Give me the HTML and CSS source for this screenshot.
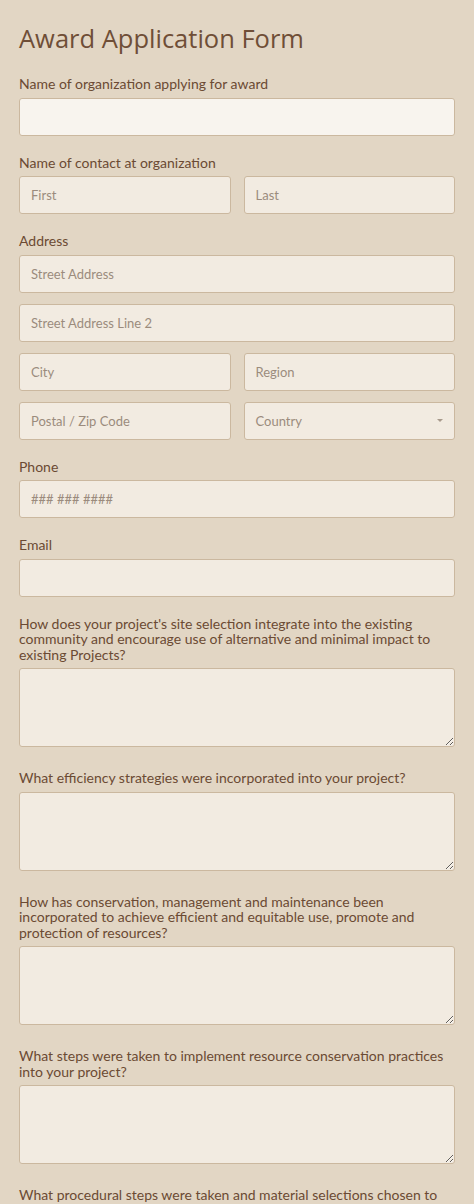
FILE: index.html
```html
<!DOCTYPE html>
<html lang="en">
<head>
  <meta charset="UTF-8">
  <title>Award Application Form</title>
  <link rel="stylesheet" href="styles.css">
</head>

<body>

  <form class="form">
    <h1 class="form-title">Award Application Form</h1>

    <div class="field">
      <label class="label">Name of organization applying for award</label>
      <input class="input input-focus" type="text">
    </div>

    <div class="field">
      <label class="label">Name of contact at organization</label>
      <div class="row">
        <input class="input" type="text" placeholder="First">
        <input class="input" type="text" placeholder="Last">
      </div>
    </div>

    <div class="field">
      <label class="label">Address</label>
      <div class="stack">
        <input class="input" type="text" placeholder="Street Address">
        <input class="input" type="text" placeholder="Street Address Line 2">
        <div class="row">
          <input class="input" type="text" placeholder="City">
          <input class="input" type="text" placeholder="Region">
        </div>
        <div class="row">
          <input class="input" type="text" placeholder="Postal / Zip Code">
          <div class="select">
            <span>Country</span>
            <svg width="8" height="5" viewBox="0 0 8 5"><path d="M1 1h6L4 4z" fill="#a89a8c"/></svg>
          </div>
        </div>
      </div>
    </div>

    <div class="field">
      <label class="label">Phone</label>
      <input class="input" type="text" placeholder="### ### ####">
    </div>

    <div class="field">
      <label class="label">Email</label>
      <input class="input" type="text">
    </div>

    <div class="field field-long">
      <label class="label">How does your project's site selection integrate into the existing community and encourage use of alternative and minimal impact to existing Projects?</label>
      <textarea class="input textarea"></textarea>
    </div>

    <div class="field field-long">
      <label class="label">What efficiency strategies were incorporated into your project?</label>
      <textarea class="input textarea"></textarea>
    </div>

    <div class="field field-long">
      <label class="label">How has conservation, management and maintenance been incorporated to achieve efficient and equitable use, promote and protection of resources?</label>
      <textarea class="input textarea"></textarea>
    </div>

    <div class="field field-long">
      <label class="label">What steps were taken to implement resource conservation practices into your project?</label>
      <textarea class="input textarea"></textarea>
    </div>

    <div class="field field-long">
      <label class="label">What procedural steps were taken and material selections chosen to reduce waste during the construction of your project?</label>
      <textarea class="input textarea"></textarea>
    </div>
  </form>

</body>
</html>
```

FILE: styles.css
```css
* {
  margin: 0;
  padding: 0;
  box-sizing: border-box;
}

body {
  font-family: 'Lato', sans-serif;
  background: #e2d6c4;
  color: #6b4a33;
}

.form {
  padding: 22px 19px 0;
}

.form-title {
  font-family: 'Open Sans', sans-serif;
  font-weight: 400;
  font-size: 25.5px;
  line-height: 32px;
  color: #6f4e37;
  margin-bottom: 22px;
}

.field {
  margin-bottom: 19px;
}

.field-long {
  margin-bottom: 23px;
}

.label {
  display: block;
  font-size: 14px;
  line-height: 15.5px;
  margin-bottom: 6px;
}

.row {
  display: grid;
  grid-template-columns: 1fr 1fr;
  gap: 13px;
}

.stack {
  display: flex;
  flex-direction: column;
  gap: 11px;
}

.input {
  display: block;
  width: 100%;
  height: 38px;
  padding: 0 11px;
  font-family: 'Lato', sans-serif;
  font-size: 13px;
  color: #6b4a33;
  background: #f2ebe1;
  border: 1px solid #cbb89f;
  border-radius: 3px;
  outline: none;
}

.input::placeholder {
  color: #9b8b7d;
}

.input-focus {
  background: #f8f4ee;
}

.textarea {
  height: 79px;
  resize: vertical;
}

.select {
  display: flex;
  align-items: center;
  justify-content: space-between;
  height: 38px;
  padding: 0 10px 0 11px;
  font-size: 13px;
  color: #9b8b7d;
  background: #f2ebe1;
  border: 1px solid #cbb89f;
  border-radius: 3px;
}
```
